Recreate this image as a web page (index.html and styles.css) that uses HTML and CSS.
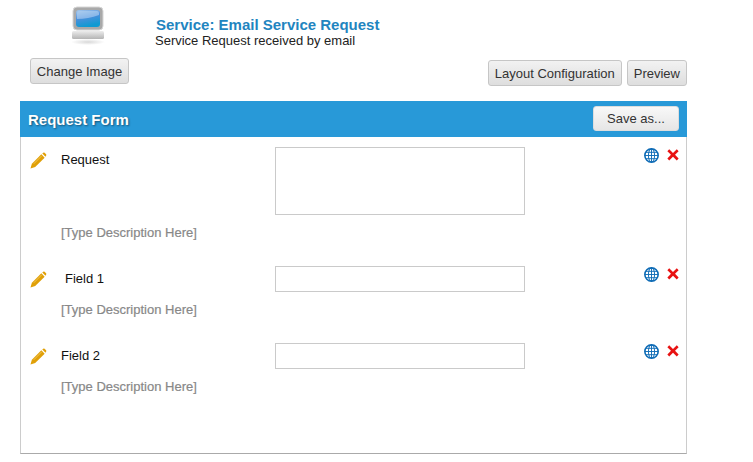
FILE: index.html
```html
<!DOCTYPE html>
<html lang="en">
<head>
  <meta charset="UTF-8">
  <title>Service: Email Service Request</title>
  <link rel="stylesheet" href="styles.css">
</head>
<body>
  <div class="top">
    <div class="image-box">
      <svg class="service-icon" width="40" height="42" viewBox="0 0 40 42">
        <defs>
          <linearGradient id="screen" x1="0" y1="0" x2="0.3" y2="1">
            <stop offset="0" stop-color="#a6c8ec"/>
            <stop offset="0.5" stop-color="#4c8fdc"/>
            <stop offset="1" stop-color="#0f9ad2"/>
          </linearGradient>
          <linearGradient id="base" x1="0" y1="0" x2="0" y2="1">
            <stop offset="0" stop-color="#ececec"/>
            <stop offset="1" stop-color="#b4b4b4"/>
          </linearGradient>
          <radialGradient id="shadow">
            <stop offset="0" stop-color="#d8d8d8"/>
            <stop offset="1" stop-color="#fff"/>
          </radialGradient>
        </defs>
        <ellipse cx="20" cy="37" rx="17" ry="3" fill="url(#shadow)"/>
        <rect x="5" y="2" width="30" height="23" rx="4" fill="#a9a9a9" stroke="#d6d6d6"/>
        <rect x="8" y="5" width="24" height="17" rx="3" fill="url(#screen)"/>
        <path d="M9 14 Q20 14 31 10 L31 8 Q31 6 29 6 L11 6 Q9 6 9 8 Z" fill="#b5d3f2" opacity="0.6"/>
        <rect x="4" y="26" width="32" height="8" rx="1.5" fill="url(#base)"/>
      </svg>
      <button class="btn">Change Image</button>
    </div>
    <div class="service-info">
      <h1 class="service-title">Service: Email Service Request</h1>
      <div class="service-sub">Service Request received by email</div>
    </div>
    <div class="top-actions">
      <button class="btn">Layout Configuration</button>
      <button class="btn">Preview</button>
    </div>
  </div>

  <div class="panel">
    <div class="panel-head">
      <span class="panel-title">Request Form</span>
      <button class="btn btn-save">Save as...</button>
    </div>
    <div class="panel-body">
      <div class="field">
        <svg class="pencil" width="17" height="17" viewBox="0 0 18 18"><use href="#pencil-shape"/></svg>
        <div class="field-label">Request</div>
        <div class="input input-tall"></div>
        <div class="field-icons">
          <svg width="15" height="15" viewBox="0 0 16 16"><use href="#globe-shape"/></svg>
          <svg width="12" height="12" viewBox="0 0 13 13"><use href="#cross-shape"/></svg>
        </div>
        <div class="field-desc">[Type Description Here]</div>
      </div>
      <div class="field">
        <svg class="pencil" width="17" height="17" viewBox="0 0 18 18"><use href="#pencil-shape"/></svg>
        <div class="field-label field-label-indent">Field 1</div>
        <div class="input"></div>
        <div class="field-icons">
          <svg width="15" height="15" viewBox="0 0 16 16"><use href="#globe-shape"/></svg>
          <svg width="12" height="12" viewBox="0 0 13 13"><use href="#cross-shape"/></svg>
        </div>
        <div class="field-desc">[Type Description Here]</div>
      </div>
      <div class="field">
        <svg class="pencil" width="17" height="17" viewBox="0 0 18 18"><use href="#pencil-shape"/></svg>
        <div class="field-label">Field 2</div>
        <div class="input"></div>
        <div class="field-icons">
          <svg width="15" height="15" viewBox="0 0 16 16"><use href="#globe-shape"/></svg>
          <svg width="12" height="12" viewBox="0 0 13 13"><use href="#cross-shape"/></svg>
        </div>
        <div class="field-desc">[Type Description Here]</div>
      </div>
    </div>
  </div>

  <svg class="defs" width="0" height="0">
    <defs>
      <g id="pencil-shape">
        <path d="M0.5 17.5 L2 12.5 L12 2.5 L15.5 6 L5.5 16 Z" fill="#e0a008"/>
        <path d="M13 1.5 L14 0.7 Q14.8 0.2 15.5 0.8 L17 2.3 Q17.7 3 17.1 3.8 L16.4 5 Z" fill="#e0a008"/>
        <path d="M4 12.5 L12.5 4" stroke="#f6cf6a" stroke-width="0.8"/>
      </g>
      <g id="globe-shape" fill="none" stroke="#0f6cb6">
        <circle cx="8" cy="8" r="7.1" stroke-width="1.7"/>
        <ellipse cx="8" cy="8" rx="3.3" ry="7" stroke-width="1"/>
        <path d="M8 1V15M1 8H15M2 4.6H14M2 11.4H14" stroke-width="1"/>
      </g>
      <path id="cross-shape" d="M0.4 2.4 L2.4 0.4 L6.5 4.2 L10.6 0.4 L12.6 2.4 L8.7 6.3 L12.6 10.4 L10.6 12.4 L6.5 8.5 L2.4 12.4 L0.4 10.4 L4.3 6.3 Z" fill="#e81212"/>
    </defs>
  </svg>
</body>
</html>
```

FILE: styles.css
```css
body {
  margin: 0;
  font-family: "Liberation Sans", Arial, sans-serif;
  font-size: 13px;
  color: #222;
  background-color: #fff;
}
.top {
  display: flex;
  width: 667px;
  height: 101px;
  margin-left: 20px;
}
.image-box {
  width: 119px;
  padding-top: 5px;
  display: flex;
  flex-direction: column;
  align-items: flex-start;
}
.service-icon {
  display: block;
  margin: 0 0 11px 48px;
}
.btn {
  height: 26px;
  padding: 0 6px;
  border: 1px solid #c6c6c6;
  border-radius: 3px;
  background: linear-gradient(#f2f2f2, #dedede);
  font-family: "Liberation Sans", Arial, sans-serif;
  font-size: 13px;
  color: #333;
  white-space: nowrap;
}
.image-box .btn {
  width: 99px;
  padding: 0;
  margin-left: 10px;
}
.service-info {
  padding: 16px 0 0 17px;
}
.service-title {
  margin: 0;
  font-size: 15px;
  line-height: 17px;
  font-weight: bold;
  color: #1f85c0;
}
.service-sub {
  margin-left: -1px;
  font-size: 13px;
  line-height: 16px;
  color: #222;
}
.top-actions {
  margin-left: auto;
  padding-top: 60px;
  display: flex;
  gap: 5px;
  align-items: flex-start;
}
.panel {
  width: 667px;
  height: 353px;
  margin-left: 20px;
  box-sizing: border-box;
  border-left: 1px solid #ccc;
  border-right: 1px solid #ccc;
  border-bottom: 1px solid #aaa;
}
.panel-head {
  height: 36px;
  margin: 0 -1px;
  padding: 0 8px;
  display: flex;
  align-items: center;
  justify-content: space-between;
  background-color: #2899d8;
}
.panel-title {
  font-size: 15px;
  font-weight: bold;
  color: #fff;
  text-shadow: 1px 1px 2px rgba(0, 0, 0, 0.45);
}
.btn-save {
  width: 86px;
  height: 25px;
  margin-bottom: 1px;
  border-color: #ddd;
  background: linear-gradient(#f8f8f8, #e6e6e6);
}
.panel-body {
  padding-top: 10px;
}
.field {
  display: grid;
  grid-template-columns: 40px 214px 250px 1fr;
  grid-template-rows: auto auto;
  margin-bottom: 25px;
}
.pencil {
  margin: 5px 0 0 9px;
}
.field-label {
  padding-top: 5px;
  line-height: 16px;
  color: #111;
}
.field-label-indent {
  padding-left: 4px;
}
.input {
  height: 24px;
  border: 1px solid #cacaca;
  background-color: #fff;
}
.input-tall {
  height: 66px;
}
.field-icons {
  display: flex;
  align-items: center;
  justify-content: flex-end;
  gap: 8px;
  height: 16px;
  padding: 0 7px 0 0;
}
.field-desc {
  grid-column: 2 / 5;
  margin-top: 10px;
  line-height: 16px;
  color: #888;
  -webkit-text-stroke: 0.2px #888;
}
.defs {
  position: absolute;
}
```
